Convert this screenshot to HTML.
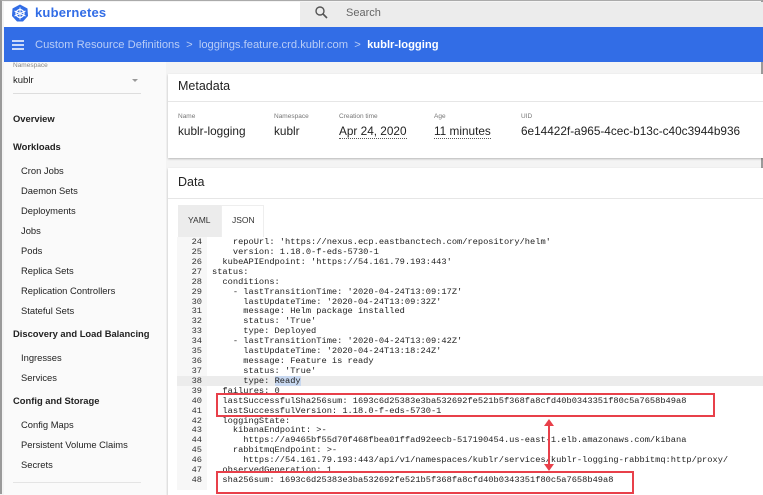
<!DOCTYPE html>
<html><head><meta charset="utf-8"><style>
*{box-sizing:border-box;margin:0;padding:0}
body{width:763px;height:494px;overflow:hidden;background:#f4f4f4;font-family:"Liberation Sans",sans-serif;position:relative;border-left:2px solid #9a9a9a;border-right:2px solid #9a9a9a;border-top:1px solid #aaa}
.abs{position:absolute}
.top{left:2px;top:1px;width:759px;height:25px;background:#fff}
.search{left:298px;top:1px;width:463px;height:25px;background:#ececec}
.blue{left:2px;top:26px;width:759px;height:35px;background:#326de6}
.side{left:2px;top:61px;width:162px;height:433px;background:#fafafa}
.side div{position:absolute;font-size:9.4px;color:#222;white-space:nowrap}
.side .h{font-weight:bold;left:9px}
.side .i{left:17px}
.card{background:#fff;box-shadow:0 1px 2px rgba(0,0,0,.25)}
.lbl{font-size:6.5px;color:#777;position:absolute}
.val{font-size:11.8px;color:#222;position:absolute}
.code{position:absolute;left:175px;top:236px;width:586px;height:253px;background:#fff;font-family:"Liberation Mono",monospace;font-size:8.7px;color:#222}
.ln{position:absolute;left:0;width:25px;text-align:right;color:#333}
.cl{position:absolute;left:35px;white-space:pre}
</style></head><body>
<div class="abs top"></div>
<div class="abs search"></div>
<svg class="abs" style="left:9px;top:3px" width="18" height="18" viewBox="0 0 18 18"><polygon points="9,0.5 16.5,4.5 17,12 12,17.5 6,17.5 1,12 1.5,4.5" fill="#326de6"/><circle cx="9" cy="9.5" r="4" fill="none" stroke="#fff" stroke-width="1.3"/><path d="M9 3.5v12M3.5 7l11 5M14.5 7l-11 5" stroke="#fff" stroke-width="1"/></svg>
<div class="abs" style="left:33px;top:4px;font-size:13px;font-weight:bold;color:#326de6;letter-spacing:0.2px">kubernetes</div>
<svg class="abs" style="left:313px;top:5px" width="13" height="13" viewBox="0 0 13 13"><circle cx="5" cy="5" r="4" fill="none" stroke="#555" stroke-width="1.4"/><path d="M8 8l4 4" stroke="#555" stroke-width="1.6"/></svg>
<div class="abs" style="left:344px;top:6px;font-size:11px;color:#666">Search</div>
<div class="abs blue"></div>
<svg class="abs" style="left:10px;top:39px" width="12" height="10"><path d="M0 1h12M0 5h12M0 9h12" stroke="#fff" stroke-width="1.6"/></svg>
<div class="abs" style="left:33px;top:38px;font-size:11.2px;color:#b9cdf6;white-space:nowrap">Custom Resource Definitions&nbsp;&nbsp;&gt;&nbsp;&nbsp;loggings.feature.crd.kublr.com&nbsp;&nbsp;&gt;&nbsp;&nbsp;<b style="color:#fff">kublr-logging</b></div>
<div class="abs side">
<div style="left:9px;top:0px;font-size:6.5px;color:#888">Namespace</div>
<div style="left:9px;top:13px;font-size:9.5px">kublr</div>
<div style="left:128px;top:17px;width:0;height:0;border-left:3px solid transparent;border-right:3px solid transparent;border-top:3px solid #999"></div>
<div style="left:9px;top:31px;width:128px;height:1px;background:#ddd"></div>
<div class="h" style="top:51px">Overview</div>
<div class="h" style="top:79px">Workloads</div>
<div class="i" style="top:103px">Cron Jobs</div>
<div class="i" style="top:123px">Daemon Sets</div>
<div class="i" style="top:143px">Deployments</div>
<div class="i" style="top:163px">Jobs</div>
<div class="i" style="top:183px">Pods</div>
<div class="i" style="top:203px">Replica Sets</div>
<div class="i" style="top:223px">Replication Controllers</div>
<div class="i" style="top:243px">Stateful Sets</div>
<div class="h" style="top:266px">Discovery and Load Balancing</div>
<div class="i" style="top:290px">Ingresses</div>
<div class="i" style="top:310px">Services</div>
<div class="h" style="top:333px">Config and Storage</div>
<div class="i" style="top:357px">Config Maps</div>
<div class="i" style="top:377px">Persistent Volume Claims</div>
<div class="i" style="top:397px">Secrets</div>
<div style="left:9px;top:420px;width:128px;height:1px;background:#e4e4e4"></div>
</div>
<div class="abs card" style="left:166px;top:73px;width:595px;height:84px">
<div style="position:absolute;left:10px;top:5px;font-size:12.5px;color:#222">Metadata</div>
<div style="position:absolute;left:0;top:27px;width:100%;height:1px;background:#e6e6e6"></div>
<div class="lbl" style="left:10px;top:39px">Name</div><div class="val" style="left:10px;top:50px">kublr-logging</div>
<div class="lbl" style="left:106px;top:39px">Namespace</div><div class="val" style="left:106px;top:50px">kublr</div>
<div class="lbl" style="left:171px;top:39px">Creation time</div><div class="val" style="left:171px;top:50px;border-bottom:1px dotted #555">Apr 24, 2020</div>
<div class="lbl" style="left:266px;top:39px">Age</div><div class="val" style="left:266px;top:50px;border-bottom:1px dotted #555">11 minutes</div>
<div class="lbl" style="left:353px;top:39px">UID</div><div class="val" style="left:353px;top:50px">6e14422f-a965-4cec-b13c-c40c3944b936</div>
</div>
<div class="abs card" style="left:166px;top:167px;width:595px;height:327px">
<div style="position:absolute;left:10px;top:7px;font-size:12.5px;color:#222">Data</div>
<div style="position:absolute;left:0;top:30px;width:100%;height:1px;background:#e6e6e6"></div>
<div style="position:absolute;left:10px;top:37px;width:43px;height:32px;background:#ececec"></div>
<div style="position:absolute;left:53px;top:37px;width:43px;height:32px;background:#fff;border:1px solid #eee;border-bottom:none"></div>
</div>
<div class="abs" style="left:186px;top:214px;font-size:8.5px;color:#333">YAML</div>
<div class="abs" style="left:230px;top:214px;font-size:8.5px;color:#333">JSON</div>
<div class="code">
<div style="position:absolute;left:0;top:0;width:30px;height:253px;background:#f7f7f7"></div>
<div style="position:absolute;left:0;top:139px;width:586px;height:10px;background:#ececec"></div>
<div id="lines"></div>
</div>
<script>
var L=[
[24,"    repoUrl: 'https://nexus.ecp.eastbanctech.com/repository/helm'"],
[25,"    version: 1.18.0-f-eds-5730-1"],
[26,"  kubeAPIEndpoint: 'https://54.161.79.193:443'"],
[27,"status:"],
[28,"  conditions:"],
[29,"    - lastTransitionTime: '2020-04-24T13:09:17Z'"],
[30,"      lastUpdateTime: '2020-04-24T13:09:32Z'"],
[31,"      message: Helm package installed"],
[32,"      status: 'True'"],
[33,"      type: Deployed"],
[34,"    - lastTransitionTime: '2020-04-24T13:09:42Z'"],
[35,"      lastUpdateTime: '2020-04-24T13:18:24Z'"],
[36,"      message: Feature is ready"],
[37,"      status: 'True'"],
[38,"      type: <span style='background:#c8d8f0'>Ready</span>"],
[39,"  failures: 0"],
[40,"  lastSuccessfulSha256sum: 1693c6d25383e3ba532692fe521b5f368fa8cfd40b0343351f80c5a7658b49a8"],
[41,"  lastSuccessfulVersion: 1.18.0-f-eds-5730-1"],
[42,"  loggingState:"],
[43,"    kibanaEndpoint: >-"],
[44,"      https://a9465bf55d70f468fbea01ffad92eecb-517190454.us-east-1.elb.amazonaws.com/kibana"],
[45,"    rabbitmqEndpoint: >-"],
[46,"      https://54.161.79.193:443/api/v1/namespaces/kublr/services/kublr-logging-rabbitmq:http/proxy/"],
[47,"  observedGeneration: 1"],
[48,"  sha256sum: 1693c6d25383e3ba532692fe521b5f368fa8cfd40b0343351f80c5a7658b49a8"]];
var h="";L.forEach(function(l,i){var t=i*9.92;h+="<div class='ln' style='top:"+t+"px'>"+l[0]+"</div><div class='cl' style='top:"+t+"px'>"+l[1]+"</div>";});
document.getElementById("lines").innerHTML=h;
</script>
<div class="abs" style="left:214px;top:392px;width:499px;height:24px;border:2px solid #e8404a"></div>
<div class="abs" style="left:214px;top:470px;width:418px;height:23px;border:2px solid #e8404a"></div>
<svg class="abs" style="left:541px;top:417px" width="12" height="54"><path d="M6 4v46" stroke="#e8404a" stroke-width="2"/><path d="M1 8L6 1L11 8Z M1 46L6 53L11 46Z" fill="#e8404a"/></svg>
</body></html>
